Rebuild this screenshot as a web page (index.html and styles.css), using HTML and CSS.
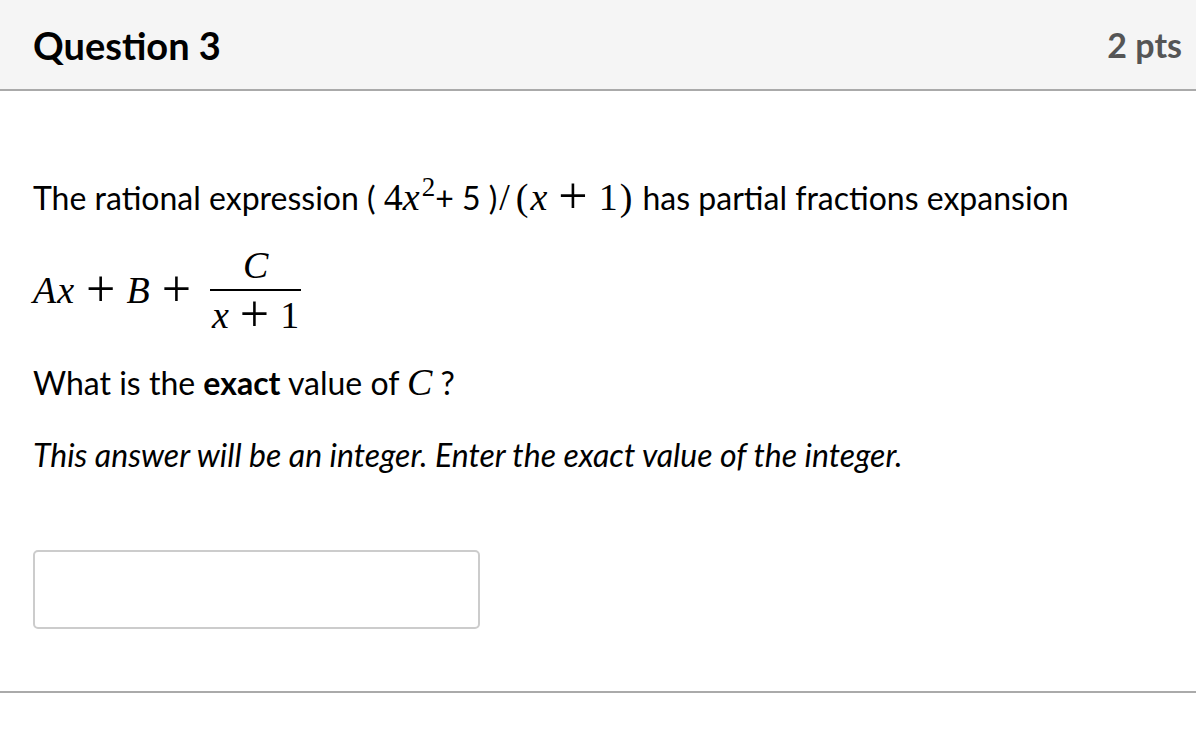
FILE: index.html
```html
<!DOCTYPE html>
<html>
<head>
<meta charset="utf-8">
<link rel="stylesheet" href="styles.css">
</head>
<body>
<div class="question">
  <div class="header">
    <h2 class="title">Question 3</h2>
    <div class="pts">2 pts</div>
  </div>
  <div class="content">
    <p class="line1">The rational expression ( <span class="m">4<i>x</i><sup>2</sup></span>+ 5 )<span class="m"><span class="sl">/</span><span class="par">(</span><i>x</i><span class="op">+</span>1<span class="par">)</span></span> has partial fractions expansion</p>
    <div class="expr m">
      <span class="lhs"><i>A</i><i>x</i><span class="op">+</span><i>B</i><span class="op">+</span></span>
      <span class="frac"><span class="num"><i>C</i></span><span class="den"><i>x</i><span class="op">+</span>1</span></span>
    </div>
    <p class="line3">What is the <b>exact</b> value of <span class="m"><i>C</i></span> ?</p>
    <p class="line4"><i>This answer will be an integer. Enter the exact value of the integer.</i></p>
    <div class="answer"><input class="box" type="text"></div>
  </div>
  <div class="footer"></div>
</div>
</body>
</html>
```
FILE: styles.css
```css
html, body { margin: 0; padding: 0; background: #fff; }
body { font-family: Lato, "Open Sans", sans-serif; color: #000; }
.header {
  display: flex; justify-content: space-between; align-items: center;
  background: #f5f5f5; height: 89px; border-bottom: 2px solid #aaa;
  padding: 0 14px 0 33px;
}
.title { margin: 0; font-size: 38px; font-weight: 700; }
.pts { font-size: 34px; font-weight: 700; color: #555; }
.content { padding: 0 33px; font-size: 32px; }
.content p { margin: 0; line-height: 40px; }
.line1 { margin-top: 86px !important; }
.m { font-family: "Liberation Serif", "DejaVu Serif", serif; font-size: 38px; }
.m i { font-style: italic; }
.lhs i { margin-right: 1px; }
.m sup { font-size: 27px; vertical-align: 14px; line-height: 0; margin-left: 2px; }
.sl { display: inline-block; margin: 0 4px 0 2px; }
.par { display: inline-block; margin: 0 2px; }
.op { display: inline-block; font-size: 52px; line-height: 0; margin: 0 11px; font-style: normal; vertical-align: -3px; }
.expr { display: flex; align-items: center; margin-top: 23px; }
.frac { display: inline-flex; flex-direction: column; align-items: center; margin-left: 8px; }
.num { padding: 0 6px; line-height: 48px; }
.den { border-top: 2px solid #000; padding: 0 2px; line-height: 48px; }
.line3 { margin-top: 23px !important; }
.line4 { margin-top: 32px !important; }
.answer { margin-top: 75px; }
.box {
  display: block; width: 447px; height: 79px; box-sizing: border-box;
  border: 2px solid #ccc; border-radius: 5px; background: #fff; padding: 0;
}
.footer { margin-top: 62px; border-top: 2px solid #aaa; }
```
